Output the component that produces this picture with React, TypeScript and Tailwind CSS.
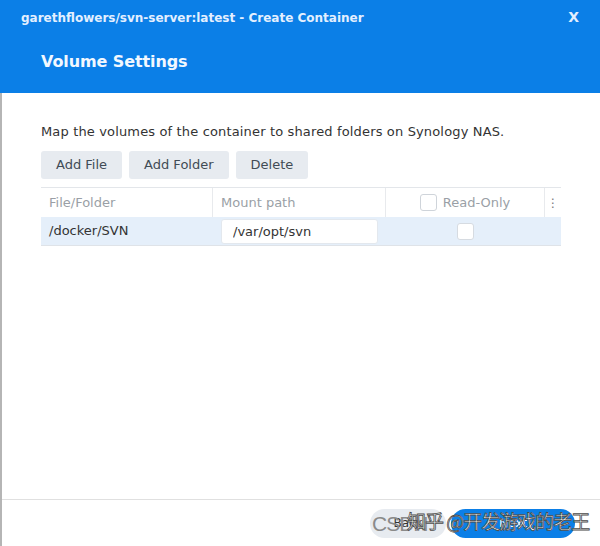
import React, { useState } from 'react';

// 卷设置对话框
interface VolumeRow {
  path: string;
  mount: string;
  readOnly: boolean;
}

const font = 'font-["DejaVu_Sans","Noto_Sans_CJK_SC",sans-serif]';

const App: React.FC = () => {
  const [rows, setRows] = useState<VolumeRow[]>([
    { path: '/docker/SVN', mount: '/var/opt/svn', readOnly: false },
  ]);

  const setMount = (i: number, v: string) => {
    setRows(rows.map((r, idx) => (idx === i ? { ...r, mount: v } : r)));
  };

  return (
    <div className={`w-[600px] h-[546px] bg-white flex flex-col overflow-hidden ${font}`}>
      {/* header */}
      <div className="h-[93px] bg-[#0b7fe7] shrink-0 flex flex-col">
        <div className="flex items-center justify-between pl-[21px] pr-[21px] pt-[9px] h-[26px]">
          <span className="text-[12px] font-bold text-[#e3efff] tracking-[0px]">
            garethflowers/svn-server:latest - Create Container
          </span>
          <span className="text-[14px] font-bold text-[#e3efff]">X</span>
        </div>
        <div className="pl-[41px] pt-[24px] text-[16px] font-bold text-[#f2f8ff] tracking-[-0.1px]">
          Volume Settings
        </div>
      </div>

      {/* body */}
      <div className="flex-1 border-l-2 border-[#b5b5b5] flex flex-col">
        <div className="flex-1 pl-[39px] pr-[39px] pt-[31px]">
          <p className="text-[13px] text-[#333] leading-[16px] tracking-[0.15px]">
            Map the volumes of the container to shared folders on Synology NAS.
          </p>
          <div className="flex gap-[7px] mt-[11px]">
            {['Add File', 'Add Folder', 'Delete'].map((b) => (
              <button key={b} className="h-[28px] px-[15px] bg-[#e7ebf0] rounded-[3px] text-[13px] text-[#414b55]">
                {b}
              </button>
            ))}
          </div>

          <div className="mt-[8px] w-[520px] border-t border-[#e3e6ea]">
            <div className="flex h-[29px] items-center text-[13px] text-[#9a9fa6]">
              <div className="w-[172px] h-full flex items-center pl-[8px] border-r border-[#e8eaed]">File/Folder</div>
              <div className="w-[173px] h-full flex items-center pl-[8px] border-r border-[#e8eaed]">Mount path</div>
              <div className="w-[159px] h-full flex items-center justify-center gap-[6px] border-r border-[#e8eaed]">
                <span className="w-[17px] h-[17px] rounded-[3px] border border-[#cfd4da] bg-white"></span>
                Read-Only
              </div>
              <div className="flex-1 h-full flex items-center justify-center text-[#777] text-[12px]">⋮</div>
            </div>
            {rows.map((r, i) => (
              <div key={i} className="flex h-[29px] items-center bg-[#e5effa] border-b border-[#dfe3e8] text-[13px] text-[#333]">
                <div className="w-[172px] pl-[8px]">{r.path}</div>
                <div className="w-[173px] pl-[8px]">
                  <input
                    value={r.mount}
                    onChange={(e) => setMount(i, e.target.value)}
                    className="w-[157px] h-[25px] bg-white rounded-[3px] border border-[#e3e8ee] px-[11px] text-[13px] text-[#333] outline-none"
                  />
                </div>
                <div className="w-[159px] flex justify-center">
                  <span className="w-[17px] h-[17px] rounded-[3px] border border-[#d6dbe1] bg-white"></span>
                </div>
              </div>
            ))}
          </div>
        </div>

        {/* footer */}
        <div className="h-[47px] border-t border-[#e0e0e0] shrink-0 relative flex items-center justify-end pr-[25px] gap-[5px]">
          <button className="h-[29px] w-[76px] rounded-full bg-[#e7ebf0] text-[12px] text-[#333]">Back</button>
          <button className="h-[29px] w-[124px] rounded-full bg-[#0b7fe7] text-[12px] text-white">Next</button>
          {/* watermark */}
          <div className="absolute left-[370px] top-[8px] text-[21px] text-[#8a8a8a] font-['Liberation_Sans',sans-serif] tracking-[-1px]">
            CSDN
          </div>
          <div className="absolute left-[405px] top-[7px] text-[19px] text-white [-webkit-text-stroke:0.8px_#4a4a4a] font-['Noto_Sans_CJK_SC',sans-serif] tracking-[-1px]">
            知乎 @开发游戏的老王
          </div>
        </div>
      </div>
    </div>
  );
};

export default App;
